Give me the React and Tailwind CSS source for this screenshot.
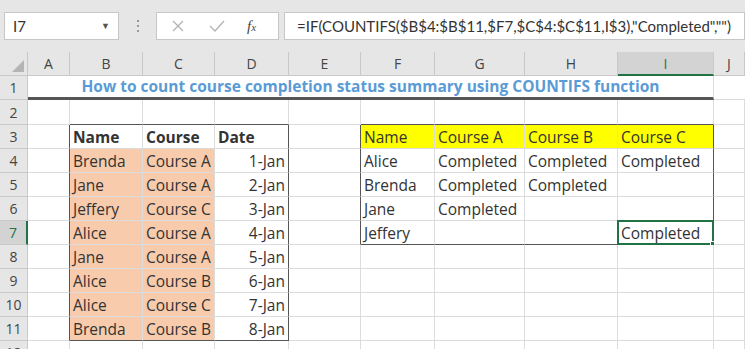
import React from 'react';

const COLS = ['', 'A', 'B', 'C', 'D', 'E', 'F', 'G', 'H', 'I', 'J'];

// sheet content by row, keyed by column letter
const data = {
  3: { B: 'Name', C: 'Course', D: 'Date', F: 'Name', G: 'Course A', H: 'Course B', I: 'Course C' },
  4: { B: 'Brenda', C: 'Course A', D: '1-Jan', F: 'Alice', G: 'Completed', H: 'Completed', I: 'Completed' },
  5: { B: 'Jane', C: 'Course A', D: '2-Jan', F: 'Brenda', G: 'Completed', H: 'Completed' },
  6: { B: 'Jeffery', C: 'Course C', D: '3-Jan', F: 'Jane', G: 'Completed' },
  7: { B: 'Alice', C: 'Course A', D: '4-Jan', F: 'Jeffery', I: 'Completed' },
  8: { B: 'Jane', C: 'Course A', D: '5-Jan' },
  9: { B: 'Alice', C: 'Course B', D: '6-Jan' },
  10: { B: 'Alice', C: 'Course C', D: '7-Jan' },
  11: { B: 'Brenda', C: 'Course B', D: '8-Jan' },
};

function cellClasses(r, c) {
  let right = 'border-r-[#dcdcdc]';
  let bottom = 'border-b-[#dcdcdc]';
  // left table B3:D11
  if (r >= 3 && r <= 11 && (c === 'A' || c === 'D')) right = 'border-r-[#555]';
  if ((r === 2 || r === 11) && ['B', 'C', 'D'].includes(c)) bottom = 'border-b-[#555]';
  // right table F3:I7
  if (r >= 3 && r <= 7 && (c === 'E' || c === 'I')) right = 'border-r-[#555]';
  if ((r === 2 || r === 7) && ['F', 'G', 'H', 'I'].includes(c)) bottom = 'border-b-[#555]';

  let bg = 'bg-white';
  if (r >= 4 && r <= 11 && (c === 'B' || c === 'C')) bg = 'bg-[#f8cbad]';
  if (r === 3 && ['F', 'G', 'H', 'I'].includes(c)) bg = 'bg-[#ffff00]';

  const bold = r === 3 && ['B', 'C', 'D'].includes(c) ? 'font-bold' : '';
  const align = c === 'D' && r >= 4 ? 'justify-end' : 'justify-start';
  return `relative flex items-center ${align} px-[3px] pt-[2px] border-r border-b ${right} ${bottom} ${bg} ${bold}`;
}

function RowHeader({ n, h }) {
  const sel = n === 7;
  return (
    <div
      className={`${h} flex items-center justify-center border-b border-b-[#c9c9c9] text-[14px] ${
        sel ? 'bg-[#d3d3d3] text-[#217346] border-r-2 border-r-[#217346]' : 'bg-[#e6e6e6] text-[#444] border-r border-r-[#c9c9c9]'
      }`}
    >
      {n}
    </div>
  );
}

export default function App() {
  const rowsH = { 2: 'h-[25px]' };
  return (
    <div className="w-[745px] h-[349px] overflow-hidden bg-white text-[#333]" style={{ fontFamily: '"Open Sans", sans-serif' }}>
      {/* formula bar */}
      <div className="h-[52px] bg-[#e6e6e6] flex items-center pl-[4px]" style={{ fontFamily: 'Lato, sans-serif' }}>
        <div className="w-[115px] h-[28px] bg-white border border-[#c6c6c6] flex items-center justify-between pl-[8px] pr-[8px] text-[15px]">
          <span>I7</span>
          <span className="text-[9px] text-[#555]">▼</span>
        </div>
        <div className="w-[37px] flex flex-col items-center gap-[3px]">
          <span className="w-[2px] h-[2px] bg-[#999]" />
          <span className="w-[2px] h-[2px] bg-[#999]" />
          <span className="w-[2px] h-[2px] bg-[#999]" />
        </div>
        <div className="w-[123px] h-[28px] bg-white border border-[#c6c6c6] flex items-center">
          <svg width="14" height="14" viewBox="0 0 14 14" className="ml-[14px]">
            <path d="M2 2 L12 12 M12 2 L2 12" stroke="#b5b5b5" strokeWidth="1.4" />
          </svg>
          <svg width="16" height="14" viewBox="0 0 16 14" className="ml-[24px]">
            <path d="M1 7 L6 12 L15 2" stroke="#b5b5b5" strokeWidth="1.4" fill="none" />
          </svg>
          <span className="ml-[22px] text-[15px] italic text-[#444]" style={{ fontFamily: '"Liberation Serif", serif' }}>
            f<span className="text-[11px]">x</span>
          </span>
        </div>
        <div className="ml-[5px] flex-1 h-[28px] bg-white border border-[#c6c6c6] flex items-center pl-[12px] text-[15px] whitespace-nowrap overflow-hidden">
          =IF(COUNTIFS($B$4:$B$11,$F7,$C$4:$C$11,I$3),"Completed","")
        </div>
      </div>

      {/* sheet */}
      <div className="grid grid-cols-[28px_42px_73px_72px_74px_72px_74px_90px_93px_96px_31px] text-[15.5px]">
        {/* column headers */}
        {COLS.map((c, i) =>
          i === 0 ? (
            <div key="corner" className="h-[24px] bg-[#e6e6e6] border-r border-b border-[#c9c9c9] flex items-end justify-end p-[3px]">
              <svg width="12" height="12" viewBox="0 0 12 12">
                <path d="M12 0 L12 12 L0 12 Z" fill="#b4b4b4" />
              </svg>
            </div>
          ) : (
            <div
              key={c}
              className={`h-[24px] flex items-center justify-center text-[14px] border-r border-r-[#c9c9c9] ${
                c === 'I' ? 'bg-[#d3d3d3] text-[#217346] border-b-2 border-b-[#217346]' : 'bg-[#e6e6e6] text-[#444] border-b border-b-[#c9c9c9]'
              }`}
            >
              {c}
            </div>
          )
        )}

        {/* row 1: merged title */}
        <RowHeader n={1} h="h-[24px]" />
        <div className="col-span-9 h-[24px] flex items-center justify-center pt-[1px] border-r border-r-[#dcdcdc] border-b-[3px] border-b-[#555] font-bold text-[#5b9bd5] text-[15.5px]">
          How to count course completion status summary using COUNTIFS function
        </div>
        <div className="h-[24px] border-b border-b-[#dcdcdc]" />

        {/* rows 2..12 */}
        {[2, 3, 4, 5, 6, 7, 8, 9, 10, 11, 12].map((r) => {
          const h = rowsH[r] || 'h-[24px]';
          return (
            <React.Fragment key={r}>
              <RowHeader n={r} h={h} />
              {COLS.slice(1).map((c) => (
                <div key={c} className={`${h} ${cellClasses(r, c)} whitespace-nowrap`}>
                  {(data[r] && data[r][c]) || ''}
                  {r === 7 && c === 'I' && (
                    <div className="absolute -left-[1px] -top-[1px] -right-[1px] -bottom-[1px] border-2 border-[#217346]">
                      <div className="absolute -right-[4px] -bottom-[4px] w-[6px] h-[6px] bg-[#217346] border border-white" />
                    </div>
                  )}
                </div>
              ))}
            </React.Fragment>
          );
        })}
      </div>
    </div>
  );
}
